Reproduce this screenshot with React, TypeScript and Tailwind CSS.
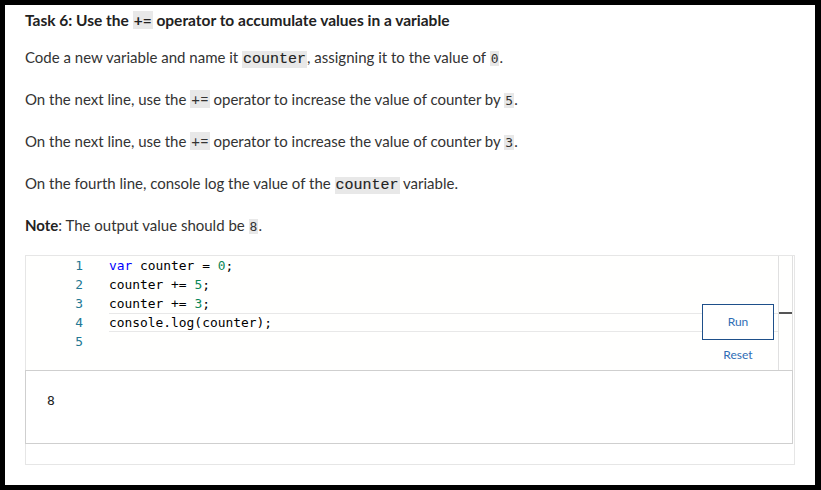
const sans = "font-['Lato','Open_Sans',sans-serif]";

function Kbd({ children }: { children: React.ReactNode }) {
  return <span className="bg-[#e8e8e8] px-[1px] leading-none">{children}</span>;
}

function Cour({ children }: { children: React.ReactNode }) {
  return (
    <span className="bg-[#e8e8e8] px-[1px] font-['Liberation_Mono',monospace] text-[15px] leading-none text-[#222] [-webkit-text-stroke:0.15px_#222]">
      {children}
    </span>
  );
}

function Num({ children }: { children: React.ReactNode }) {
  return (
    <span className="bg-[#e8e8e8] px-[1px] font-['DejaVu_Sans_Mono',monospace] text-[13px] leading-none">
      {children}
    </span>
  );
}

const lines: React.ReactNode[] = [
  <>
    <span className="text-[#0000ff]">var</span> counter = <span className="text-[#098658]">0</span>;
  </>,
  <>
    counter += <span className="text-[#098658]">5</span>;
  </>,
  <>
    counter += <span className="text-[#098658]">3</span>;
  </>,
  <>console.log(counter);</>,
  <></>,
];

export default function App() {
  return (
    <div className="w-[821px] h-[490px] bg-black pt-[5px] pl-[5px] pr-[6px] pb-[5px]">
      <div className={`h-full bg-white px-5 pt-[5px] text-[#333] ${sans}`}>
        <h1 className="text-[15.5px] font-bold leading-[20px] text-[#222]">
          Task 6: Use the <Kbd>+=</Kbd> operator to accumulate values in a variable
        </h1>
        <div className="mt-[16px] flex flex-col gap-5 text-[15px] leading-[22px]">
          <p>
            Code a new variable and name it <Cour>counter</Cour>, assigning it to the value of <Num>0</Num>.
          </p>
          <p>
            On the next line, use the <Kbd>+=</Kbd> operator to increase the value of counter by <Num>5</Num>.
          </p>
          <p>
            On the next line, use the <Kbd>+=</Kbd> operator to increase the value of counter by <Num>3</Num>.
          </p>
          <p>
            On the fourth line, console log the value of the <Cour>counter</Cour> variable.
          </p>
          <p>
            <b className="text-[#222]">Note</b>: The output value should be <Num>8</Num>.
          </p>
        </div>

        <div className="mt-[19px] border border-[#e6e6e6] h-[210px]">
          <div className="relative flex h-[114px] bg-[#fffffe] border-r border-[#e0e0e0] mr-[1px]">
            <div className="w-[83px] pr-[26px] text-right font-['DejaVu_Sans_Mono',monospace] text-[12.9px] leading-[19px] text-[#237893]">
              {lines.map((_, i) => (
                <div key={i}>{i + 1}</div>
              ))}
            </div>
            <div className="flex-1 font-['DejaVu_Sans_Mono',monospace] text-[12.9px] leading-[19px] text-black">
              {lines.map((l, i) => (
                <div
                  key={i}
                  className={`h-[19px] whitespace-pre ${i === 3 ? "border-y border-[#e8e8e8] leading-[17px]" : ""}`}
                >
                  {l}
                </div>
              ))}
            </div>
            <div className="w-[14px] border-l border-[#e0e0e0] relative">
              <div className="absolute left-0 right-0 top-[56px] h-[2px] bg-[#555]" />
            </div>
            <div className="absolute left-[676px] top-[48px] flex flex-col items-center">
              <button className="w-[72px] h-[36px] border border-[#1e4f8a] bg-white text-[12px] text-[#2f6db5]">
                Run
              </button>
              <span className="mt-[6px] text-[12px] text-[#2f6db5]">Reset</span>
            </div>
          </div>
          <div className="h-[74px] border border-[#cfcfcf] mr-[1px] -ml-[1px] pl-[21px] pt-[20px] font-['DejaVu_Sans_Mono',monospace] text-[13px] text-[#222]">
            8
          </div>
        </div>
      </div>
    </div>
  );
}
